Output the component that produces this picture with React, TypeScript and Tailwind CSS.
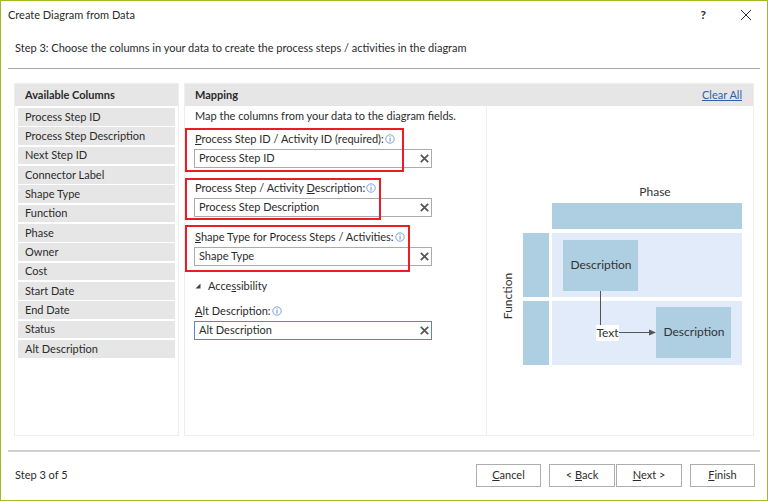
import React from 'react';

const columns = [
  'Process Step ID',
  'Process Step Description',
  'Next Step ID',
  'Connector Label',
  'Shape Type',
  'Function',
  'Phase',
  'Owner',
  'Cost',
  'Start Date',
  'End Date',
  'Status',
  'Alt Description',
];

function InfoIcon() {
  return (
    <svg width="10" height="10" viewBox="0 0 10 10" className="ml-[1px] shrink-0">
      <circle cx="5" cy="5" r="4.2" fill="none" stroke="#6f9bd8" strokeWidth="0.9" />
      <rect x="4.6" y="2.2" width="0.9" height="1" fill="#4f83cc" />
      <rect x="4.6" y="4" width="0.9" height="3.6" fill="#4f83cc" />
    </svg>
  );
}

function ClearIcon() {
  return (
    <svg width="9" height="9" viewBox="0 0 9 9" className="shrink-0">
      <path d="M0.8 0.8 L8.2 8.2 M8.2 0.8 L0.8 8.2" stroke="#555555" strokeWidth="1.7" fill="none" />
    </svg>
  );
}

function Field({ label, value, active, redClass }: { label: React.ReactNode; value: string; active?: boolean; redClass?: string }) {
  return (
    <div className="relative">
      <div className="flex h-[20px] items-center pl-[1px]">
        <span>{label}</span>
        <InfoIcon />
      </div>
      <div className={`flex h-[19px] w-[238px] items-center justify-between border pl-[4px] pr-[2px] ${active ? 'border-[#5b84cc]' : 'border-[#ababab]'}`}>
        <span>{value}</span>
        <ClearIcon />
      </div>
      {redClass && <div className={`pointer-events-none absolute border-2 border-[#ec1c24] ${redClass}`} />}
    </div>
  );
}

function WizardButton({ children, className }: { children: React.ReactNode; className: string }) {
  return (
    <button className={`flex h-[23px] items-center justify-center border border-[#adadad] bg-white ${className}`}>
      {children}
    </button>
  );
}

function Diagram() {
  const blue = '#aecfe2';
  const pale = '#e1ebf9';
  const textCls = 'fill-[#333333]';
  return (
    <svg viewBox="487 106 266 329" width="266" height="329" className="block shrink-0">
      <text x="655" y="196" textAnchor="middle" fontSize="12" className={textCls}>Phase</text>
      <rect x="552" y="203" width="190" height="26" fill={blue} />
      <rect x="523" y="233" width="26" height="64" fill={blue} />
      <rect x="523" y="301" width="26" height="64" fill={blue} />
      <rect x="552" y="233" width="190" height="64" fill={pale} />
      <rect x="552" y="301" width="190" height="64" fill={pale} />
      <rect x="563" y="240" width="75" height="51" fill={blue} />
      <rect x="656" y="307" width="75" height="51" fill={blue} />
      <text x="601" y="269" textAnchor="middle" fontSize="12" className={textCls}>Description</text>
      <text x="694" y="336" textAnchor="middle" fontSize="12" className={textCls}>Description</text>
      <text transform="translate(512 296) rotate(-90)" textAnchor="middle" fontSize="12" className={textCls}>Function</text>
      <path d="M600.5 291 V325" stroke="#555555" strokeWidth="1" fill="none" />
      <path d="M618 332.5 H650" stroke="#555555" strokeWidth="1" fill="none" />
      <path d="M656 332.5 L649 329.5 V335.5 Z" fill="#555555" />
      <rect x="596" y="325" width="23" height="16" fill="#ffffff" />
      <text x="607.5" y="336.5" textAnchor="middle" fontSize="12" className={textCls}>Text</text>
    </svg>
  );
}

export default function App() {
  return (
    <div className="flex h-[501px] w-[768px] flex-col overflow-hidden border border-[#a4b91f] bg-white font-['Lato',sans-serif] text-[11px] text-[#2b2b2b]">
      <div className="flex h-[28px] shrink-0 items-center justify-between pl-[7px]">
        <span>Create Diagram from Data</span>
        <div className="flex items-center">
          <span className="mr-[34px] text-[12px] font-bold">?</span>
          <svg width="12" height="12" viewBox="0 0 12 12" className="mr-[15px]">
            <path d="M1 1 L11 11 M11 1 L1 11" stroke="#333333" strokeWidth="1" fill="none" />
          </svg>
        </div>
      </div>
      <div className="flex h-[39px] shrink-0 items-center pl-[14px]">
        Step 3: Choose the columns in your data to create the process steps / activities in the diagram
      </div>
      <div className="mx-[7px] h-px shrink-0 bg-[#a6a6a6]" />

      <div className="flex h-[381px] shrink-0 gap-[5px] pl-[13px] pt-[14px]">
        <div className="h-[353px] w-[165px] border border-[#eeeeee]">
          <div className="flex h-[22px] items-center bg-[#e6e6e6] pl-[10px] font-bold">Available Columns</div>
          <div className="flex flex-col gap-[1.75px] px-[3px] pt-[2px]">
            {columns.map((c) => (
              <div key={c} className="flex h-[17.6px] items-center bg-[#e6e6e6] pl-[7px]">{c}</div>
            ))}
          </div>
        </div>

        <div className="flex h-[353px] w-[570px] flex-col border border-[#eeeeee]">
          <div className="flex h-[22px] shrink-0 items-center justify-between bg-[#e6e6e6] pl-[10px] pr-[11px]">
            <span className="font-bold">Mapping</span>
            <a className="text-[#2f5fa8] underline">Clear All</a>
          </div>
          <div className="flex flex-1">
            <div className="w-[302px] shrink-0 border-r border-[#eeeeee] pl-[9px]">
              <div className="mb-[3px] flex h-[20px] items-center pl-[1px]">Map the columns from your data to the diagram fields.</div>
              <div className="flex flex-col gap-[10px]">
                <Field
                  label={<><u>P</u>rocess Step ID / Activity ID (required):</>}
                  value="Process Step ID"
                  redClass="-left-[9px] -top-[1px] h-[44px] w-[219px]"
                />
                <Field
                  label={<>Process Step / Activity <u>D</u>escription:</>}
                  value="Process Step Description"
                  redClass="-left-[9px] top-0 h-[42px] w-[196px]"
                />
                <Field
                  label={<><u>S</u>hape Type for Process Steps / Activities:</>}
                  value="Shape Type"
                  redClass="-left-[9px] -top-[2px] h-[47px] w-[225px]"
                />
              </div>
              <div className="mb-[5px] mt-[10px] flex h-[20px] items-center">
                <svg width="6" height="6" viewBox="0 0 6 6" className="ml-[1px] mr-[7px]">
                  <path d="M5.5 0.5 V5.5 H0.5 Z" fill="#444444" />
                </svg>
                <span>Acce<u>s</u>sibility</span>
              </div>
              <Field label={<><u>A</u>lt Description:</>} value="Alt Description" active />
            </div>
            <Diagram />
          </div>
        </div>
      </div>

      <div className="mx-[7px] h-[2px] shrink-0 bg-[#d0d0d0]" />
      <div className="flex flex-1 items-start justify-between pl-[14px] pr-[12px] pt-[12px]">
        <span className="flex h-[23px] items-center">Step 3 of 5</span>
        <div className="flex">
          <WizardButton className="mr-[8px] w-[65px]"><span><u>C</u>ancel</span></WizardButton>
          <WizardButton className="mr-[1px] w-[66px]"><span>&lt; <u>B</u>ack</span></WizardButton>
          <WizardButton className="mr-[8px] w-[66px]"><span><u>N</u>ext &gt;</span></WizardButton>
          <WizardButton className="w-[65px]"><span><u>F</u>inish</span></WizardButton>
        </div>
      </div>
    </div>
  );
}
